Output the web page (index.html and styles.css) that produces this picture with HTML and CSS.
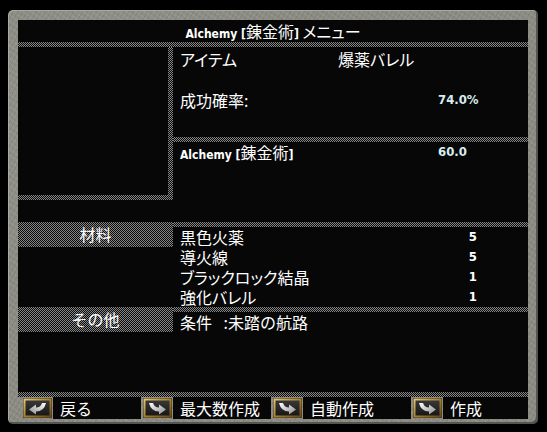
FILE: index.html
```html
<!DOCTYPE html>
<html lang="ja">
<head>
    <meta charset="UTF-8">
    <title>Alchemy [錬金術] メニュー</title>
    <link rel="stylesheet" href="styles.css">
</head>
<body>
    <div class="frame">
        <div class="inner">
            <div class="title"><b class="latin">Alchemy [</b>錬金術<b class="latin">]</b> <span class="kana">メニュー</span></div>
            <div class="rule"></div>

            <div class="top">
                <div class="portrait-wrap">
                    <div class="portrait"></div>
                </div>
                <div class="info">
                    <div class="info-row first">
                        <span class="kana">アイテム</span>
                        <span class="kana wide">爆薬バレル</span>
                    </div>
                    <div class="info-row second">
                        <span>成功確率:</span>
                        <span></span>
                        <span class="num">74.0%</span>
                    </div>
                    <div class="rule info-rule"></div>
                    <div class="info-row">
                        <span class="span2"><b class="latin">Alchemy [</b>錬金術<b class="latin">]</b></span>
                        <span class="num">60.0</span>
                    </div>
                </div>
            </div>

            <div class="gap"></div>

            <!-- 材料 -->
            <div class="section">
                <div class="label">材料</div>
                <div class="list">
                    <div class="item"><span>黒色火薬</span><span class="count">5</span></div>
                    <div class="item"><span>導火線</span><span class="count">5</span></div>
                    <div class="item"><span class="kana">ブラックロック結晶</span><span class="count">1</span></div>
                    <div class="item"><span class="kana">強化バレル</span><span class="count">1</span></div>
                </div>
            </div>

            <!-- その他 -->
            <div class="section">
                <div class="label">その他</div>
                <div class="list">
                    <div class="item cond"><span>条件 :未踏の航路</span></div>
                </div>
            </div>

            <div class="spacer"></div>
            <div class="rule"></div>
        </div>

        <div class="bar">
            <div class="btn b1">
                <svg class="icon" width="29" height="20" viewBox="0 0 29 20"><use href="#frame"/><g transform="translate(29 0) scale(-1 1)"><use href="#arrow"/></g></svg>
                <span class="btn-label">戻る</span>
            </div>
            <div class="btn b2">
                <svg class="icon" width="29" height="20" viewBox="0 0 29 20"><use href="#frame"/><use href="#arrow"/></svg>
                <span class="btn-label">最大数作成</span>
            </div>
            <div class="btn b3">
                <svg class="icon" width="29" height="20" viewBox="0 0 29 20"><use href="#frame"/><use href="#arrow"/></svg>
                <span class="btn-label">自動作成</span>
            </div>
            <div class="btn b4">
                <svg class="icon" width="29" height="20" viewBox="0 0 29 20"><use href="#frame"/><use href="#arrow"/></svg>
                <span class="btn-label">作成</span>
            </div>
        </div>
    </div>

    <!-- アイコン定義 -->
    <svg width="0" height="0" class="defs">
        <defs>
            <linearGradient id="gold" x1="0" y1="0" x2="1" y2="1">
                <stop offset="0" stop-color="#e2c472"/>
                <stop offset="0.5" stop-color="#a7802e"/>
                <stop offset="1" stop-color="#6a4c18"/>
            </linearGradient>
            <linearGradient id="face" x1="0" y1="0" x2="0" y2="1">
                <stop offset="0" stop-color="#3a3a3a"/>
                <stop offset="1" stop-color="#151515"/>
            </linearGradient>
            <linearGradient id="arr" x1="0" y1="0" x2="1" y2="1">
                <stop offset="0" stop-color="#ffffff"/>
                <stop offset="1" stop-color="#8c8c8c"/>
            </linearGradient>
            <g id="frame">
                <rect x="0.5" y="0.5" width="28" height="19" fill="#2a2418" stroke="#3b3222"/>
                <rect x="1.5" y="1.5" width="26" height="17" fill="url(#face)" stroke="url(#gold)" stroke-width="2"/>
            </g>
            <path id="arrow" d="M6 5 L10 5 Q11.5 9.5 16 9.5 L16 6.5 L23 11.5 L16 16.5 L16 13.5 Q8 13.5 6 5 Z" fill="url(#arr)"/>
        </defs>
    </svg>
</body>
</html>
```

FILE: styles.css
```css
body {
    margin: 0;
    background-color: #000;
    color: #fff;
    font-family: "Noto Sans CJK JP", sans-serif;
    font-size: 16px;
}

.defs {
    position: absolute;
}

/* 石の枠 */
.frame {
    width: 510px;
    height: 399px;
    margin: 10px 0 0 8px;
    padding: 10px 10px 5px;
    border-radius: 5px;
    background:
        repeating-linear-gradient(35deg, rgba(255, 255, 255, 0.06) 0 2px, transparent 2px 5px),
        repeating-linear-gradient(-60deg, rgba(0, 0, 0, 0.07) 0 1px, transparent 1px 4px),
        radial-gradient(circle at 20% 30%, rgba(255, 255, 255, 0.08), transparent 40%),
        #8b8b84;
    box-shadow: inset 1px 1px 0 #a9a9a1, inset -2px -2px 0 #55554f;
}

.inner {
    height: 377px;
    display: flex;
    flex-direction: column;
    background-color: #070707;
}

.rule, .label, .list::before, .portrait-wrap {
    background: conic-gradient(#868686 25%, #0a0a0a 0 50%, #868686 0 75%, #0a0a0a 0) 0 0 / 2px 2px;
}

.rule {
    height: 5px;
    flex: none;
}

.latin {
    font-family: "DejaVu Sans Condensed", "DejaVu Sans", sans-serif;
    font-weight: bold;
    font-size: 12px;
}

.kana {
    font-feature-settings: "palt";
}

.title {
    height: 22px;
    line-height: 22px;
    text-align: center;
}

/* 上部 */
.top {
    height: 153px;
    display: flex;
    flex: none;
}
.portrait-wrap {
    width: 155px;
    height: 153px;
    padding: 0 5px 5px 0;
    box-sizing: border-box;
}
.portrait {
    height: 100%;
    background-color: #070707;
}
.info {
    flex: 1;
    display: flex;
    flex-direction: column;
}
.info-row {
    display: grid;
    grid-template-columns: 158px 100px 1fr;
    padding-left: 7px;
    height: 20px;
    line-height: 20px;
}
.info-row.first {
    height: 25px;
    line-height: 25px;
}
.info-row.second {
    margin-top: 18px;
}
.wide {
    grid-column: 2 / -1;
}
.span2 {
    grid-column: 1 / 3;
}
.info-rule {
    margin-top: 27px;
}
.num {
    font-family: "DejaVu Sans Condensed", "DejaVu Sans", sans-serif;
    font-weight: bold;
    font-size: 13px;
    color: #d6eef0;
}

.gap {
    height: 22px;
    flex: none;
}

/* 材料・その他 */
.section {
    display: flex;
    flex: none;
}
.label {
    width: 155px;
    height: 25px;
    line-height: 25px;
    text-align: center;
}
.list {
    flex: 1;
}
.list::before {
    content: "";
    display: block;
    height: 5px;
}
.item {
    display: flex;
    justify-content: space-between;
    height: 20px;
    line-height: 20px;
    padding: 0 51px 0 7px;
}
.item.cond {
    word-spacing: 8px;
}
.count {
    font-family: "DejaVu Sans Condensed", "DejaVu Sans", sans-serif;
    font-weight: bold;
    font-size: 13px;
}

.spacer {
    flex: 1;
}

/* ボタン */
.bar {
    display: flex;
    height: 22px;
    padding-left: 5px;
}
.btn {
    display: flex;
    align-items: center;
    gap: 1px;
}
.btn.b1 { width: 118px; margin-right: 2px; }
.btn.b2 { width: 128px; margin-right: 2px; }
.btn.b3 { width: 138px; margin-right: 2px; }
.btn.b4 { flex: 1; }
.icon {
    flex: none;
    display: block;
}
.btn-label {
    flex: 1;
    align-self: stretch;
    line-height: 22px;
    padding-left: 7px;
    background-color: #070707;
}
```
